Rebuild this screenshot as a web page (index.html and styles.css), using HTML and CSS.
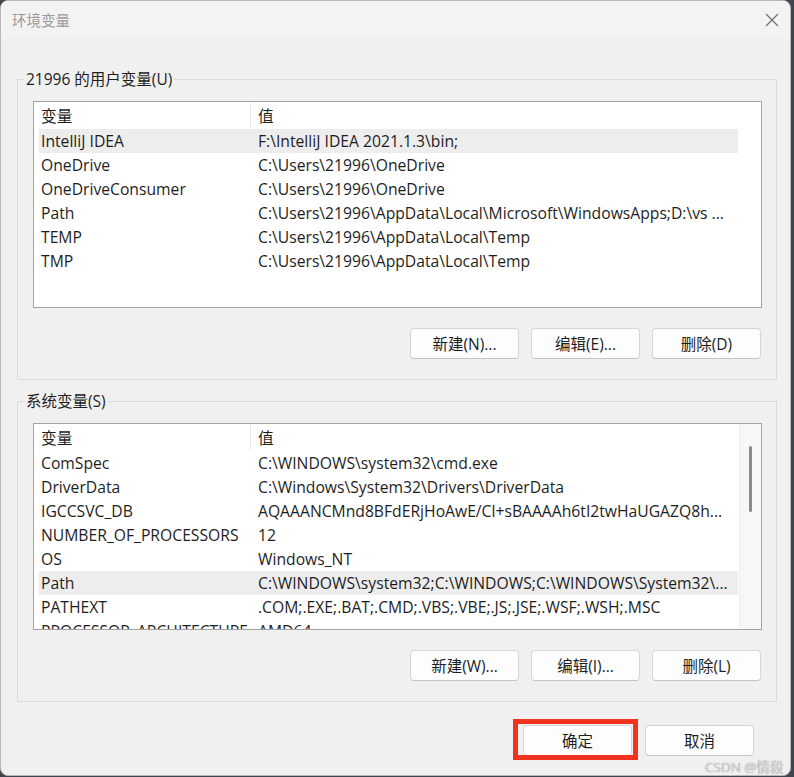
FILE: index.html
```html
<!DOCTYPE html>
<html lang="zh-CN">
<head>
<meta charset="utf-8">
<title>环境变量</title>
<link rel="stylesheet" href="styles.css">
</head>
<body>
<div class="desk">
  <div class="window">
    <div class="titlebar">
      <span class="title">环境变量</span>
      <svg class="close" width="14" height="14" viewBox="0 0 14 14"><path d="M1 1 L13 13 M13 1 L1 13" stroke="#6b6b6b" stroke-width="1.1" fill="none"/></svg>
    </div>
    <div class="content">
      <fieldset class="group">
        <legend>21996 的用户变量(U)</legend>
        <div class="list">
          <div class="rows">
            <div class="row head"><div class="c1">变量</div><div class="c2">值</div></div>
            <div class="row sel"><div class="c1">IntelliJ IDEA</div><div class="c2">F:\IntelliJ IDEA 2021.1.3\bin;</div></div>
            <div class="row"><div class="c1">OneDrive</div><div class="c2">C:\Users\21996\OneDrive</div></div>
            <div class="row"><div class="c1">OneDriveConsumer</div><div class="c2">C:\Users\21996\OneDrive</div></div>
            <div class="row"><div class="c1">Path</div><div class="c2">C:\Users\21996\AppData\Local\Microsoft\WindowsApps;D:\vs ...</div></div>
            <div class="row"><div class="c1">TEMP</div><div class="c2">C:\Users\21996\AppData\Local\Temp</div></div>
            <div class="row"><div class="c1">TMP</div><div class="c2">C:\Users\21996\AppData\Local\Temp</div></div>
          </div>
          <div class="vscroll empty"></div>
        </div>
        <div class="btns">
          <button class="btn">新建(N)...</button>
          <button class="btn">编辑(E)...</button>
          <button class="btn">删除(D)</button>
        </div>
      </fieldset>

      <fieldset class="group second">
        <legend>系统变量(S)</legend>
        <div class="list">
          <div class="rows">
            <div class="row head"><div class="c1">变量</div><div class="c2">值</div></div>
            <div class="row"><div class="c1">ComSpec</div><div class="c2">C:\WINDOWS\system32\cmd.exe</div></div>
            <div class="row"><div class="c1">DriverData</div><div class="c2">C:\Windows\System32\Drivers\DriverData</div></div>
            <div class="row"><div class="c1">IGCCSVC_DB</div><div class="c2">AQAAANCMnd8BFdERjHoAwE/Cl+sBAAAAh6tI2twHaUGAZQ8h...</div></div>
            <div class="row"><div class="c1">NUMBER_OF_PROCESSORS</div><div class="c2">12</div></div>
            <div class="row"><div class="c1">OS</div><div class="c2">Windows_NT</div></div>
            <div class="row sel"><div class="c1">Path</div><div class="c2">C:\WINDOWS\system32;C:\WINDOWS;C:\WINDOWS\System32\...</div></div>
            <div class="row"><div class="c1">PATHEXT</div><div class="c2">.COM;.EXE;.BAT;.CMD;.VBS;.VBE;.JS;.JSE;.WSF;.WSH;.MSC</div></div>
            <div class="row"><div class="c1">PROCESSOR_ARCHITECTURE</div><div class="c2">AMD64</div></div>
          </div>
          <div class="vscroll"><div class="thumb"></div></div>
        </div>
        <div class="btns">
          <button class="btn">新建(W)...</button>
          <button class="btn">编辑(I)...</button>
          <button class="btn">删除(L)</button>
        </div>
      </fieldset>

      <div class="footer">
        <button class="btn ok">确定</button>
        <button class="btn">取消</button>
      </div>
    </div>
  </div>
  <div class="redbox"></div>
  <div class="watermark">CSDN @情殺</div>
</div>
</body>
</html>
```

FILE: styles.css
```css
* { box-sizing: border-box; }
html, body { margin: 0; padding: 0; }
body {
  background: #3e4650;
  font-family: "Open Sans", "Noto Sans CJK SC", sans-serif;
  font-size: 15.7px;
  color: #1e1e1e;
  width: 794px;
  height: 777px;
  overflow: hidden;
}
.desk { position: relative; width: 794px; height: 777px; }
.window {
  width: 791px;
  height: 776px;
  background: #f0f0f0;
  border: 1px solid #b8b8b8;
  border-radius: 8px;
  overflow: hidden;
}
.titlebar {
  height: 37px;
  background: #f3f3f3;
  display: flex;
  align-items: center;
  justify-content: space-between;
  padding: 0 12px 0 11px;
}
.title { color: #9b9b9b; font-size: 14.5px; }
.close { display: block; margin-right: -1px; }
.content { padding: 31px 13px 0 16px; }
.group {
  margin: 0;
  padding: 12px 14px 20px 15px;
  border: 1px solid #dadada;
  width: 760px;
}
.group legend {
  margin-left: -9px;
  padding: 0 2px;
  line-height: 20px;
  font-size: 15.5px;
  color: #1e1e1e;
}
.group.second { margin-top: 11px; }
.list {
  height: 207px;
  border: 1px solid #a3a3a3;
  background: #fff;
  display: flex;
  overflow: hidden;
}
.rows { flex: 1; padding-left: 5px; overflow: hidden; }
.row {
  display: flex;
  height: 24px;
  align-items: center;
  width: 699px;
  white-space: nowrap;
}
.row.head { height: 27px; align-items: flex-start; }
.row.sel { background: #ededed; }
.c1 { width: 212px; padding-left: 2px; flex: none; }
.c2 { padding-left: 7px; flex: 1; overflow: hidden; }
.row.head .c1 { border-right: 1px solid #e8e8e8; height: 26px; line-height: 29px; }
.row.head .c2 { line-height: 29px; }
.vscroll { width: 22px; flex: none; background: #fff; position: relative; }
.second .vscroll { background: #f7f7f7; border-left: 1px solid #ececec; }
.thumb {
  position: absolute;
  left: 9px;
  top: 22px;
  width: 3px;
  height: 66px;
  border-radius: 2px;
  background: #8a8a8a;
}
.btns {
  display: flex;
  justify-content: flex-end;
  gap: 12px;
  margin-top: 20px;
  padding-right: 1px;
}
.btn {
  width: 109px;
  height: 31px;
  background: #fdfdfd;
  border: 1px solid #d6d6d6;
  border-bottom-color: #c4c4c4;
  border-radius: 4px;
  font-family: inherit;
  font-size: 15.5px;
  color: #1e1e1e;
  padding: 0;
}
.footer {
  display: flex;
  justify-content: flex-end;
  gap: 13px;
  margin-top: 23px;
  padding-right: 23px;
}
.redbox {
  position: absolute;
  left: 513px;
  top: 719px;
  width: 125px;
  height: 41px;
  border: 5px solid #f0321e;
}
.watermark {
  position: absolute;
  left: 705px;
  top: 756px;
  font-size: 13.5px;
  color: #d6d6d6;
  text-shadow: 0 0 1px #8a8a8a;
  white-space: nowrap;
}
```
